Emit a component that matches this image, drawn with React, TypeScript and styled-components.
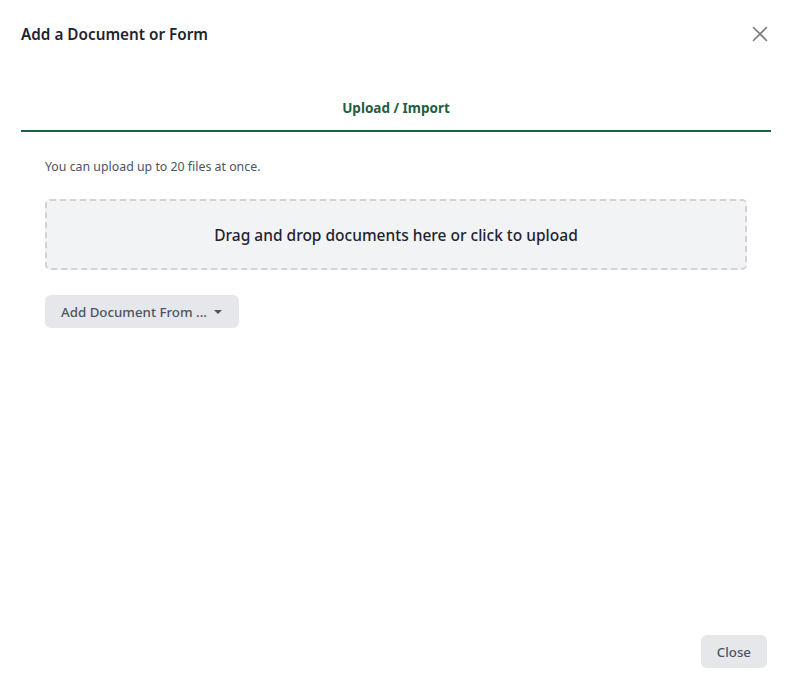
import React from 'react';
import styled, { createGlobalStyle } from 'styled-components';

const GlobalStyle = createGlobalStyle`
  html, body {
    margin: 0;
    padding: 0;
    background: #ffffff;
  }
  body {
    font-family: "Noto Sans", "Open Sans", "Liberation Sans", sans-serif;
    color: #1f2937;
  }
`;

const Modal = styled.div`
  width: 792px;
  height: 682px;
  box-sizing: border-box;
  background: #ffffff;
  border-radius: 6px;
  display: flex;
  flex-direction: column;
`;

const Header = styled.div`
  display: flex;
  align-items: center;
  justify-content: space-between;
  padding: 22px 24px 0 21px;
  height: 24px;
`;

const Title = styled.h2`
  margin: 0;
  font-size: 15.3px;
  font-weight: 600;
  color: #1f2430;
`;

const CloseIcon = styled.button`
  border: none;
  background: none;
  padding: 0;
  width: 16px;
  height: 16px;
  display: flex;
  align-items: center;
  justify-content: center;
  cursor: pointer;
  color: #7a7a7a;
`;

const Body = styled.div`
  flex: 1;
  padding: 0 21px;
  display: flex;
  flex-direction: column;
`;

const Tabs = styled.div`
  margin-top: 53px;
  border-bottom: 2px solid #1f6040;
  display: flex;
  justify-content: center;
`;

const Tab = styled.div<{ $active?: boolean }>`
  font-size: 13.5px;
  font-weight: 700;
  color: ${(p) => (p.$active ? '#1f6040' : '#6b7280')};
  padding: 0 0 13px;
  line-height: 18px;
`;

const Panel = styled.div`
  padding: 26px 24px 0;
  display: flex;
  flex-direction: column;
  align-items: flex-start;
`;

const Hint = styled.p`
  margin: 0;
  font-size: 12.35px;
  line-height: 18px;
  color: #4b5563;
`;

const DropZone = styled.div`
  margin-top: 23px;
  align-self: stretch;
  height: 71px;
  box-sizing: border-box;
  background: #f2f3f5;
  border: 2px dashed #d1d3d7;
  border-radius: 5px;
  display: flex;
  align-items: center;
  justify-content: center;
  font-size: 15.5px;
  font-weight: 500;
  color: #1f2430;
  cursor: pointer;
`;

const GrayButton = styled.button`
  border: none;
  background: #e5e7eb;
  border-radius: 6px;
  height: 33px;
  padding: 0 16px;
  display: inline-flex;
  align-items: center;
  gap: 7px;
  font-family: inherit;
  font-size: 13.3px;
  font-weight: 500;
  color: #4b5563;
  cursor: pointer;
`;

const AddButton = styled(GrayButton)`
  margin-top: 25px;
  width: 194px;
`;

const Caret = styled.span`
  width: 0;
  height: 0;
  border-left: 4px solid transparent;
  border-right: 4px solid transparent;
  border-top: 4px solid #4b5563;
  margin-top: 1px;
`;

const Footer = styled.div`
  display: flex;
  justify-content: flex-end;
  padding: 0 25px 14px;
`;

const App: React.FC = () => {
  return (
    <>
      <GlobalStyle />
      <Modal>
        <Header>
          <Title>Add a Document or Form</Title>
          <CloseIcon aria-label="Close">
            <svg width="16" height="16" viewBox="0 0 16 16" fill="none">
              <path d="M1.5 1.5L14.5 14.5M14.5 1.5L1.5 14.5" stroke="currentColor" strokeWidth="1.6" strokeLinecap="round" />
            </svg>
          </CloseIcon>
        </Header>
        <Body>
          <Tabs>
            <Tab $active>Upload / Import</Tab>
          </Tabs>
          <Panel>
            <Hint>You can upload up to 20 files at once.</Hint>
            <DropZone>Drag and drop documents here or click to upload</DropZone>
            <AddButton>
              Add Document From ...
              <Caret />
            </AddButton>
          </Panel>
        </Body>
        <Footer>
          <GrayButton>Close</GrayButton>
        </Footer>
      </Modal>
    </>
  );
};

export default App;
